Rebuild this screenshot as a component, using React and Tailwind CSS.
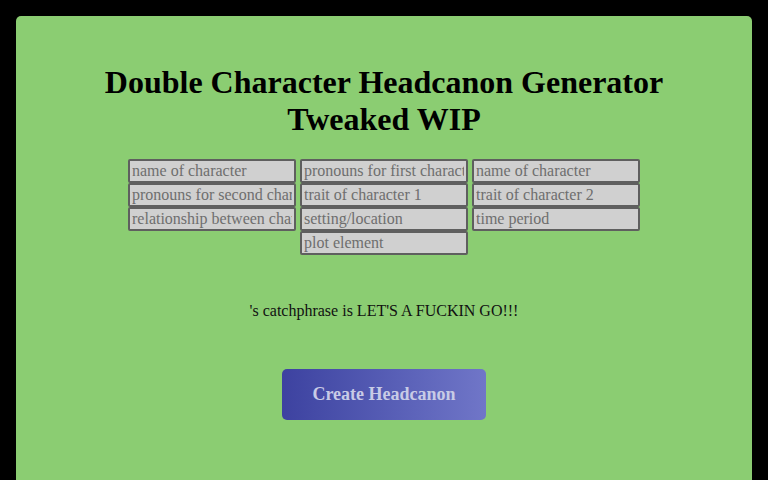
export default function App() {
  const inp =
    "block w-[168px] h-[24px] box-border border-2 border-[#5f5f5f] rounded-[2px] bg-[#d0d0d0] px-[2px] text-[16px] leading-[18px] text-[#333] placeholder:text-[#6e6e6e] outline-none";
  return (
    <div className="min-h-[480px] bg-black p-4 pb-0" style={{ fontFamily: '"Liberation Serif", serif' }}>
      <div className="bg-[#8bcd72] rounded-t-[5px] min-h-[464px] pt-[48px] flex flex-col items-center">
        <h1 className="m-0 text-[32px] leading-[37px] font-bold text-black text-center">
          Double Character Headcanon Generator
          <br />
          Tweaked WIP
        </h1>
        <div className="mt-[21px] flex gap-[4px] items-start">
          <div className="flex flex-col">
            <input className={inp} placeholder="name of character" />
            <input className={inp} placeholder="pronouns for second character" />
            <input className={inp} placeholder="relationship between characters" />
          </div>
          <div className="flex flex-col">
            <input className={inp} placeholder="pronouns for first character" />
            <input className={inp} placeholder="trait of character 1" />
            <input className={inp} placeholder="setting/location" />
            <input className={inp} placeholder="plot element" />
          </div>
          <div className="flex flex-col">
            <input className={inp} placeholder="name of character" />
            <input className={inp} placeholder="trait of character 2" />
            <input className={inp} placeholder="time period" />
          </div>
        </div>
        <p className="mt-[47px] text-[16px] leading-[18px] text-[#111]">'s catchphrase is LET'S A FUCKIN GO!!!</p>
        <button className="mt-[49px] w-[204px] h-[51px] rounded-[5px] bg-gradient-to-r from-[#3d42a0] to-[#7076c8] text-[#c8cbe6] text-[18px] font-bold">
          Create Headcanon
        </button>
      </div>
    </div>
  );
}
